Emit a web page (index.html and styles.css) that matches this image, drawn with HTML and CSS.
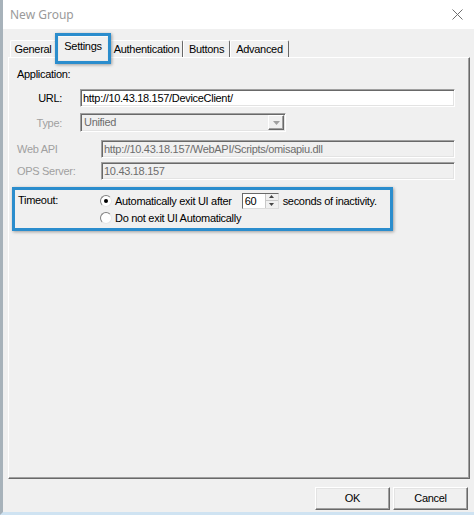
FILE: index.html
```html
<!DOCTYPE html>
<html>
<head>
<meta charset="utf-8">
<link rel="stylesheet" href="styles.css">
</head>
<body>
<div class="window">
  <div class="titlebar">
    <span class="title">New Group</span>
    <svg class="close" width="11" height="11" viewBox="0 0 11 11"><path d="M0.5 0.5 L10.5 10.5 M10.5 0.5 L0.5 10.5" stroke="#6e6e6e" stroke-width="1" fill="none"/></svg>
  </div>
  <div class="client">
    <div class="tabs">
      <div class="tab tab-general">General</div>
      <div class="tab tab-settings active">Settings</div>
      <div class="tab tab-auth">Authentication</div>
      <div class="tab tab-buttons">Buttons</div>
      <div class="tab tab-advanced">Advanced</div>
    </div>
    <div class="panel">
      <div class="section-label">Application:</div>
      <div class="row row-url">
        <span class="lbl-short">URL:</span>
        <div class="field field-url sunken">http://10.43.18.157/DeviceClient/</div>
      </div>
      <div class="row row-type">
        <span class="lbl-short disabled">Type:</span>
        <div class="combo sunken">
          <span class="combo-text">Unified</span>
          <span class="combo-btn">
            <svg width="7" height="4" viewBox="0 0 7 4"><path d="M0 0 H7 L3.5 4 Z" fill="#a0a0a0"/></svg>
          </span>
        </div>
      </div>
      <div class="row row-api">
        <span class="lbl-long disabled">Web API</span>
        <div class="field field-ro sunken">http://10.43.18.157/WebAPI/Scripts/omisapiu.dll</div>
      </div>
      <div class="row row-ops">
        <span class="lbl-long disabled">OPS Server:</span>
        <div class="field field-ro sunken">10.43.18.157</div>
      </div>
      <div class="timeout">
        <div class="timeout-label">Timeout:</div>
        <div class="options">
          <div class="option">
            <span class="radio checked"></span>
            <span class="opt-text">Automatically exit UI after</span>
            <div class="spin">
              <span class="spin-val">60</span>
              <span class="spin-btns">
                <span class="spin-btn"><svg width="5" height="3" viewBox="0 0 5 3"><path d="M0 3 H5 L2.5 0 Z" fill="#444"/></svg></span>
                <span class="spin-btn"><svg width="5" height="3" viewBox="0 0 5 3"><path d="M0 0 H5 L2.5 3 Z" fill="#444"/></svg></span>
              </span>
            </div>
            <span class="opt-after">seconds of inactivity.</span>
          </div>
          <div class="option">
            <span class="radio"></span>
            <span class="opt-text">Do not exit UI Automatically</span>
          </div>
        </div>
      </div>
    </div>
    <div class="buttons">
      <div class="btn">OK</div>
      <div class="btn">Cancel</div>
    </div>
  </div>
</div>
</body>
</html>
```

FILE: styles.css
```css
html, body {
  margin: 0;
  padding: 0;
  background: #ffffff;
}

.window {
  width: 474px;
  height: 515px;
  box-sizing: border-box;
  border-left: 3px solid #a7b2ba;
  border-bottom: 3px solid #cfe3f2;
  background: #f0f0f0;
  display: flex;
  flex-direction: column;
  font-family: "Liberation Sans", Arial, sans-serif;
  font-size: 11px;
  letter-spacing: -0.3px;
  color: #000;
  overflow: hidden;
}

.titlebar {
  height: 29px;
  flex: none;
  background: #ffffff;
  display: flex;
  align-items: center;
  justify-content: space-between;
  padding: 0 11px 0 7px;
}

.title {
  font-family: "Noto Sans", "Open Sans", sans-serif;
  font-size: 12px;
  letter-spacing: 0;
  color: #9a9a9a;
}

.close {
  display: block;
}

.client {
  flex: 1;
  display: flex;
  flex-direction: column;
  padding: 0 4px 0 5px;
}

.tabs {
  height: 28px;
  flex: none;
  display: flex;
  align-items: flex-end;
  padding-left: 2px;
  position: relative;
  z-index: 2;
}

.tab {
  height: 17px;
  box-sizing: border-box;
  border-top: 1px solid #ffffff;
  border-left: 1px solid #ffffff;
  border-right: 1px solid #696969;
  border-radius: 2px 2px 0 0;
  text-align: center;
  line-height: 16px;
  background: #f0f0f0;
}

.tab-general { width: 46px; }
.tab-settings { width: 54px; }
.tab-auth { width: 73px; }
.tab-buttons { width: 47px; }
.tab-advanced { width: 59px; }

.tab.active {
  height: 22px;
  margin-bottom: -1px;
  line-height: 19px;
  position: relative;
}

.tab.active::after {
  content: "";
  position: absolute;
  left: -2px;
  right: -2px;
  top: -4px;
  bottom: -6px;
  border: 3px solid #2b8dcd;
  box-shadow: 1px 1px 3px rgba(0, 0, 0, 0.35), inset 0 0 1px rgba(0, 0, 0, 0.2);
}

.panel {
  height: 422px;
  flex: none;
  box-sizing: border-box;
  border-top: 1px solid #ffffff;
  border-left: 1px solid #ffffff;
  border-right: 1px solid #696969;
  border-bottom: 1px solid #696969;
  box-shadow: inset -1px -1px 0 #a0a0a0;
  padding: 9px 0 0 8px;
  display: flex;
  flex-direction: column;
  align-items: flex-start;
}

.section-label {
  line-height: 14px;
  height: 14px;
}

.row {
  display: flex;
  align-items: center;
}

.row-url { margin-top: 8px; }
.row-type { margin-top: 6px; }
.row-api { margin-top: 8px; }
.row-ops { margin-top: 4px; }

.lbl-short {
  width: 45px;
  margin-right: 18px;
  text-align: right;
}

.lbl-long {
  width: 84px;
}

.disabled {
  color: #a0a0a0;
}

.sunken {
  box-sizing: border-box;
  border-style: solid;
  border-width: 1px;
  border-color: #a0a0a0 #ffffff #ffffff #a0a0a0;
  box-shadow: inset 1px 1px 0 #696969, inset -1px -1px 0 #e3e3e3;
}

.field {
  height: 18px;
  line-height: 16px;
  padding-left: 2px;
  white-space: nowrap;
  overflow: hidden;
}

.field-url {
  width: 375px;
  background: #ffffff;
}

.field-ro {
  width: 354px;
  background: #f0f0f0;
  color: #6d6d6d;
}

.combo {
  width: 206px;
  height: 19px;
  background: #f0f0f0;
  display: flex;
  align-items: center;
  justify-content: space-between;
  padding: 1px 1px 1px 3px;
}

.combo-text {
  color: #6d6d6d;
  line-height: 15px;
}

.combo-btn {
  width: 16px;
  height: 15px;
  box-sizing: border-box;
  border-style: solid;
  border-width: 1px;
  border-color: #ffffff #696969 #696969 #ffffff;
  box-shadow: inset -1px -1px 0 #a0a0a0;
  display: flex;
  align-items: center;
  justify-content: center;
}

.combo-btn svg {
  display: block;
}

.timeout {
  margin-top: 7px;
  margin-left: -5px;
  width: 381px;
  height: 44px;
  box-sizing: border-box;
  border: 3px solid #2b8dcd;
  box-shadow: 1px 1px 3px rgba(0, 0, 0, 0.35);
  padding: 2px 0 0 3px;
  display: flex;
}

.timeout-label {
  width: 82px;
  line-height: 17px;
}

.options {
  display: flex;
  flex-direction: column;
}

.option {
  height: 17px;
  display: flex;
  align-items: center;
}

.radio {
  width: 12px;
  height: 12px;
  box-sizing: border-box;
  border-radius: 50%;
  border: 1px solid;
  border-color: #808080 #e6e6e6 #e6e6e6 #808080;
  background: #ffffff;
  margin-right: 3px;
  display: flex;
  align-items: center;
  justify-content: center;
}

.radio.checked::after {
  content: "";
  width: 4px;
  height: 4px;
  border-radius: 50%;
  background: #000000;
}

.spin {
  margin-left: 10px;
  width: 37px;
  height: 16px;
  box-sizing: border-box;
  border-style: solid;
  border-width: 1px;
  border-color: #696969 #dcdcdc #dcdcdc #696969;
  background: #ffffff;
  display: flex;
  justify-content: space-between;
}

.spin-val {
  line-height: 14px;
  padding-left: 2px;
}

.spin-btns {
  width: 12px;
  display: flex;
  flex-direction: column;
  background: #f0f0f0;
  border-left: 1px solid #c8c8c8;
}

.spin-btn {
  flex: 1;
  display: flex;
  align-items: center;
  justify-content: center;
}

.spin-btn + .spin-btn {
  border-top: 1px solid #c8c8c8;
}

.spin-btn svg {
  display: block;
}

.opt-after {
  margin-left: 4px;
}

.buttons {
  margin-top: 8px;
  display: flex;
  justify-content: flex-end;
  gap: 3px;
  padding-right: 2px;
}

.btn {
  width: 75px;
  height: 23px;
  box-sizing: border-box;
  border-style: solid;
  border-width: 1px;
  border-color: #ffffff #696969 #696969 #ffffff;
  box-shadow: inset -1px -1px 0 #a0a0a0, inset 1px 1px 0 #e3e3e3;
  background: #f0f0f0;
  text-align: center;
  line-height: 20px;
}
```
